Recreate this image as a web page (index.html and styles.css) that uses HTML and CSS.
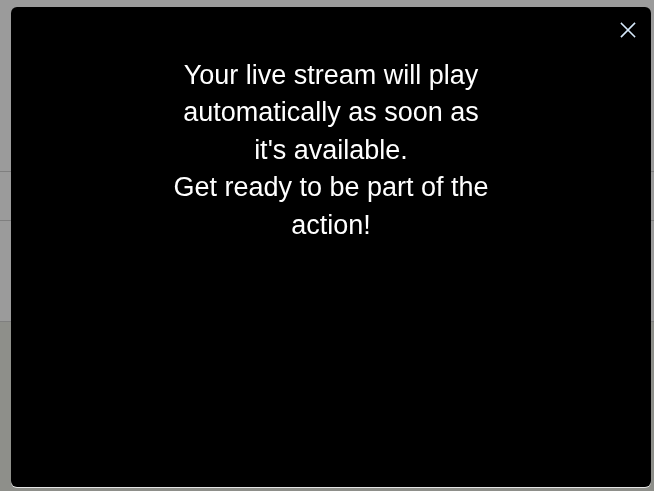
FILE: index.html
```html
<!DOCTYPE html>
<html lang="en">
<head>
<meta charset="utf-8">
<title>Live stream</title>
<link rel="stylesheet" href="styles.css">
</head>
<body>
<div class="page">
  <div class="row row-a"></div>
  <div class="row row-b"></div>
  <div class="row row-c"></div>
  <div class="row row-d"></div>
</div>
<div class="modal">
  <button class="close" aria-label="Close">
    <svg viewBox="0 0 16 16" width="16" height="16"><path d="M1.5 1.5 L14.5 14.5 M14.5 1.5 L1.5 14.5" stroke="currentColor" stroke-width="1.6" fill="none" stroke-linecap="square"/></svg>
  </button>
  <p class="message">Your live stream will play automatically as soon as it's available.<br>Get ready to be part of the action!</p>
</div>
</body>
</html>
```
FILE: styles.css
```css
html, body {
  margin: 0;
  padding: 0;
  height: 100%;
}
body {
  background: #8e8f8a;
  font-family: "Liberation Sans", Arial, sans-serif;
  overflow: hidden;
}
.page {
  display: flex;
  flex-direction: column;
}
.row {
  background: #9b9b9b;
  border-bottom: 1px solid #7f7f7f;
}
.row-a { height: 171px; }
.row-b { height: 48px; }
.row-c { height: 100px; }
.row-d { height: 0; border-bottom: none; }
.modal {
  position: fixed;
  top: 7px;
  left: 11px;
  width: 640px;
  height: 480px;
  background: #000;
  border-radius: 6px;
  box-shadow: 0 1px 0 #e6e6e6;
  box-sizing: border-box;
  padding-top: 50px;
}
.close {
  position: absolute;
  top: 15px;
  right: 15px;
  width: 16px;
  height: 16px;
  padding: 0;
  border: 0;
  background: transparent;
  color: #d6e9fb;
  display: flex;
}
.message {
  margin: 0 auto;
  width: 320px;
  color: #fff;
  font-size: 27px;
  line-height: 37.4px;
  text-align: center;
}
```
